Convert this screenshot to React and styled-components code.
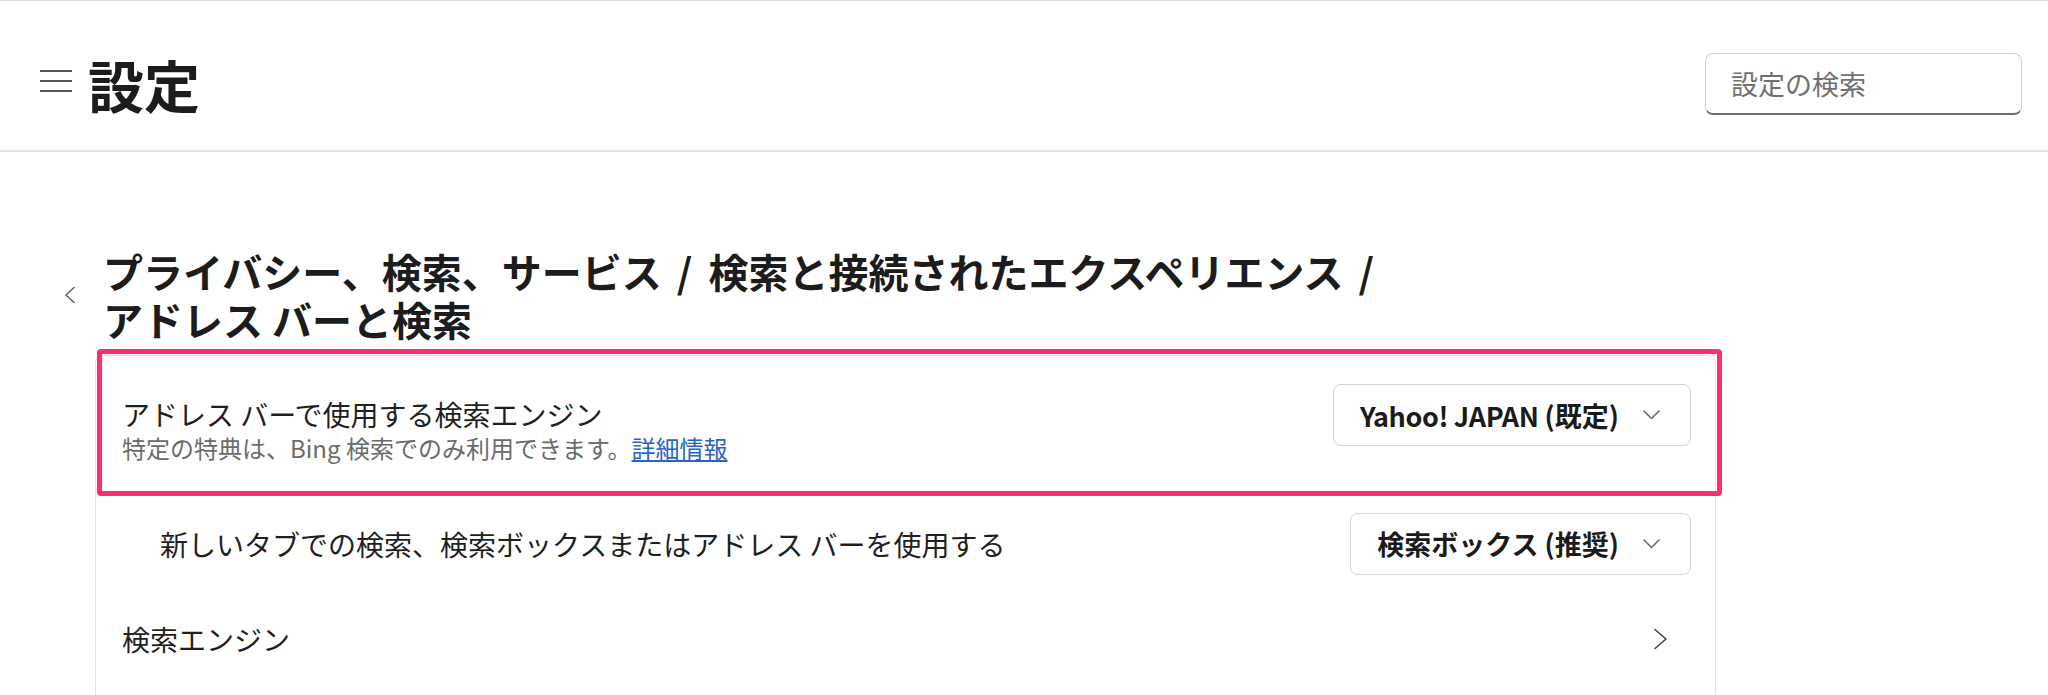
import React from 'react';
import styled, { createGlobalStyle } from 'styled-components';

const GlobalStyle = createGlobalStyle`
  html, body { margin: 0; padding: 0; background: #ffffff; }
  body {
    font-family: "Noto Sans CJK JP", "Noto Sans", "Liberation Sans", sans-serif;
    color: #1b1b1b;
    overflow: hidden;
  }
  * { box-sizing: border-box; }
`;

const Page = styled.div`
  border-top: 1px solid #dedede;
  background: #ffffff;
  min-height: 695px;
`;

const Header = styled.header`
  display: flex;
  align-items: center;
  padding: 52px 26px 35px 40px;
  border-bottom: 2px solid #e4e4e4;
`;

const MenuButton = styled.div`
  display: flex;
  width: 32px;
  height: 22px;
  margin-bottom: 6px;
  color: #555;
`;

const PageTitle = styled.h1`
  margin: 0 0 0 16px;
  font-size: 56px;
  line-height: 62px;
  font-weight: 700;
  color: #1c1c1c;
`;

const SearchInput = styled.input`
  margin-left: auto;
  width: 317px;
  height: 62px;
  border: 1px solid #d2d2d2;
  border-bottom: 2px solid #6f6f6f;
  border-radius: 8px;
  padding: 0 0 0 25px;
  font-family: "Noto Sans CJK JP", "Noto Sans", sans-serif;
  font-size: 27px;
  color: #1b1b1b;
  background: #fff;
  outline: none;
  &::placeholder { color: #707070; }
`;

const Main = styled.main`
  padding-top: 95px;
`;

const Breadcrumb = styled.div`
  display: flex;
  align-items: center;
  padding-left: 63px;
  gap: 26px;
`;

const BackIcon = styled.div`
  display: flex;
  width: 14px;
  height: 18px;
  color: #666;
`;

const Crumbs = styled.h2`
  margin: 0;
  max-width: 1360px;
  font-size: 40px;
  line-height: 48px;
  font-weight: 700;
  word-spacing: 7px;
  color: #1c1c1c;
`;

const Crumb = styled.span`
  display: inline-block;
  height: 48px;
  white-space: nowrap;
  word-spacing: normal;
`;

const Sep = styled.span`
  margin-left: 15px;
`;

const CardWrap = styled.div`
  position: relative;
  margin: 12px 0 0 95px;
  width: 1621px;
`;

const Card = styled.section`
  border: 1px solid #e2e2e2;
  border-radius: 8px;
  background: #fff;
  padding-bottom: 60px;
`;

const Highlight = styled.div`
  position: absolute;
  top: -6px;
  left: 2px;
  width: 1625px;
  height: 147px;
  border: 5px solid #fe2f6c;
  border-radius: 4px;
  pointer-events: none;
`;

const Row = styled.div`
  display: flex;
  justify-content: space-between;
  align-items: ${p => (p.$top ? 'flex-start' : 'center')};
  height: ${p => p.$height}px;
  padding: ${p => (p.$top ? '28px' : '0')} ${p => p.$right}px 0 ${p => p.$indent}px;
`;

const TextBlock = styled.div`
  display: flex;
  flex-direction: column;
  margin-top: ${p => p.$offset || 0}px;
`;

const RowTitle = styled.div`
  font-size: 28px;
  line-height: 36px;
  color: #1f1f1f;
`;

const RowSub = styled.div`
  font-size: 24px;
  line-height: 32px;
  color: #6b6b6b;
`;

const Link = styled.a`
  color: #2a63c6;
  text-decoration: underline;
  cursor: pointer;
`;

const Dropdown = styled.div`
  display: inline-flex;
  align-items: center;
  gap: 24px;
  height: 62px;
  padding: 0 30px 0 26px;
  border: 1px solid #d5d5d5;
  border-radius: 8px;
  font-size: 27px;
  font-weight: 700;
  color: #1b1b1b;
  white-space: nowrap;
  background: #fff;
`;

const Latin = styled.span`
  letter-spacing: -0.4px;
`;

const Caret = styled.div`
  display: flex;
  width: 17px;
  height: 10px;
  color: #6a6a6a;
`;

const ChevronRight = styled.div`
  display: flex;
  width: 15px;
  height: 22px;
  color: #444;
`;

const HamburgerSvg = () => (
  <svg width="32" height="22" viewBox="0 0 32 22" fill="none" stroke="currentColor" strokeWidth="2">
    <line x1="0" y1="1" x2="32" y2="1" />
    <line x1="0" y1="11" x2="32" y2="11" />
    <line x1="0" y1="21" x2="32" y2="21" />
  </svg>
);

const DownSvg = () => (
  <svg width="17" height="10" viewBox="0 0 17 10" fill="none" stroke="currentColor" strokeWidth="1.6" strokeLinecap="round" strokeLinejoin="round">
    <polyline points="1,1 8.5,8.5 16,1" />
  </svg>
);

function Select({ children }) {
  return (
    <Dropdown>
      <span>{children}</span>
      <Caret><DownSvg /></Caret>
    </Dropdown>
  );
}

export default function App() {
  return (
    <Page>
      <GlobalStyle />
      <Header>
        <MenuButton><HamburgerSvg /></MenuButton>
        <PageTitle>設定</PageTitle>
        <SearchInput placeholder="設定の検索" />
      </Header>
      <Main>
        <Breadcrumb>
          <BackIcon>
            <svg width="14" height="18" viewBox="0 0 14 18" fill="none" stroke="currentColor" strokeWidth="1.6" strokeLinecap="round" strokeLinejoin="round">
              <polyline points="11,1.5 3,9 11,16.5" />
            </svg>
          </BackIcon>
          <Crumbs>
            <Crumb>プライバシー、検索、サービス<Sep>/</Sep></Crumb>{' '}
            <Crumb>検索と接続されたエクスペリエンス<Sep>/</Sep></Crumb>{' '}
            <Crumb>アドレス バーと検索</Crumb>
          </Crumbs>
        </Breadcrumb>
        <CardWrap>
          <Card>
            <Row $top $height={140} $indent={26} $right={24}>
              <TextBlock $offset={12}>
                <RowTitle>アドレス バーで使用する検索エンジン</RowTitle>
                <RowSub>
                  特定の特典は、Bing 検索でのみ利用できます。<Link>詳細情報</Link>
                </RowSub>
              </TextBlock>
              <Select><Latin>Yahoo! JAPAN</Latin> (既定)</Select>
            </Row>
            <Row $height={95} $indent={64} $right={24}>
              <RowTitle>新しいタブでの検索、検索ボックスまたはアドレス バーを使用する</RowTitle>
              <Select>検索ボックス (推奨)</Select>
            </Row>
            <Row $height={96} $indent={26} $right={47}>
              <RowTitle>検索エンジン</RowTitle>
              <ChevronRight>
                <svg width="15" height="22" viewBox="0 0 15 22" fill="none" stroke="currentColor" strokeWidth="1.6" strokeLinecap="round" strokeLinejoin="round">
                  <polyline points="2,1.5 13,11 2,20.5" />
                </svg>
              </ChevronRight>
            </Row>
          </Card>
          <Highlight />
        </CardWrap>
      </Main>
    </Page>
  );
}
